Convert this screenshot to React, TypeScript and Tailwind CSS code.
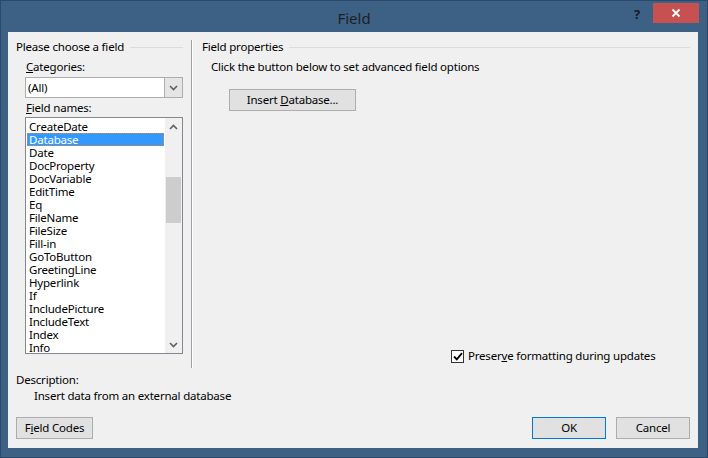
import React from "react";

// Word "Field" dialog

const FONT = { fontFamily: '"Noto Sans", "Open Sans", sans-serif' };

const FIELD_NAMES = [
  "CreateDate",
  "Database",
  "Date",
  "DocProperty",
  "DocVariable",
  "EditTime",
  "Eq",
  "FileName",
  "FileSize",
  "Fill-in",
  "GoToButton",
  "GreetingLine",
  "Hyperlink",
  "If",
  "IncludePicture",
  "IncludeText",
  "Index",
  "Info",
];

function GroupHeader({ title }: { title: string }) {
  return (
    <div className="flex items-center h-[16px] gap-[6px]">
      <span className="whitespace-nowrap">{title}</span>
      <div className="flex-1 h-px bg-[#dcdcdc]" />
    </div>
  );
}

function Chevron({ up }: { up?: boolean }) {
  return (
    <svg width="9" height="6" viewBox="0 0 9 6">
      <path
        d={up ? "M1 5 L4.5 1.5 L8 5" : "M1 1 L4.5 4.5 L8 1"}
        fill="none"
        stroke="#606060"
        strokeWidth="1.6"
      />
    </svg>
  );
}

function Button({
  children,
  width,
  primary,
}: {
  children: React.ReactNode;
  width: string;
  primary?: boolean;
}) {
  return (
    <div
      className={
        "h-[22px] flex items-center justify-center bg-[#e1e1e1] border " +
        (primary ? "border-[#0078d7] " : "border-[#adadad] ") +
        width
      }
    >
      <span>{children}</span>
    </div>
  );
}

export default function App() {
  return (
    <div
      className="w-[708px] h-[458px] bg-[#3d6185] border border-[#2b4a6b] flex flex-col text-[11.5px] tracking-[-0.2px] text-black"
      style={FONT}
    >
      {/* Title bar */}
      <div className="h-[31px] flex items-start relative">
        <div className="flex-1 text-center text-[15px] tracking-normal text-[#1f1f1f] pt-[6px]">Field</div>
        <div className="absolute right-[67px] top-[4px] text-[13px] font-bold text-[#1a1a1a]">?</div>
        <div className="absolute right-[8px] top-[2px] w-[46px] h-[20px] bg-[#c75050] flex items-center justify-center">
          <svg width="10" height="10" viewBox="0 0 10 10">
            <path d="M1.5 1.5 L8.5 8.5 M8.5 1.5 L1.5 8.5" stroke="#fff" strokeWidth="1.8" />
          </svg>
        </div>
      </div>

      {/* Content */}
      <div className="ml-[7px] mr-[9px] h-[416px] bg-[#f0f0f0] px-[8px] pt-[7px] flex flex-col">
        <div className="flex h-[330px]">
          {/* Left group */}
          <div className="w-[167px] flex flex-col">
            <GroupHeader title="Please choose a field" />
            <div className="ml-[10px] mt-[3px] h-[16px]">
              <u>C</u>ategories:
            </div>
            <div className="ml-[9px] mt-[3px] w-[158px] h-[21px] flex border border-[#adadad] bg-white">
              <div className="flex-1 flex items-center pl-[2px]">(All)</div>
              <div className="w-[18px] bg-[#e5e5e5] border-l border-[#adadad] flex items-center justify-center">
                <Chevron />
              </div>
            </div>
            <div className="ml-[10px] mt-[1px] h-[16px]">
              <u>F</u>ield names:
            </div>
            <div className="ml-[9px] mt-[2px] w-[158px] h-[237px] flex border border-[#828790] bg-white">
              <div className="flex-1 flex flex-col pt-[2px] pl-[1px] pr-[1px]">
                {FIELD_NAMES.map((name) => (
                  <div
                    key={name}
                    className={
                      "h-[13px] leading-[13px] pl-[2px] " +
                      (name === "Database"
                        ? "bg-[#3399ff] text-white outline-1 outline-dotted outline-[#e2862f] -outline-offset-1"
                        : "")
                    }
                  >
                    {name}
                  </div>
                ))}
              </div>
              <div className="w-[17px] bg-[#f0f0f0] flex flex-col items-center">
                <div className="h-[17px] flex items-center justify-center">
                  <Chevron up />
                </div>
                <div className="mt-[42px] w-[15px] h-[46px] bg-[#cdcdcd]" />
                <div className="flex-1" />
                <div className="h-[17px] flex items-center justify-center">
                  <Chevron />
                </div>
              </div>
            </div>
          </div>

          {/* Separator */}
          <div className="ml-[8px] mt-[1px] w-[2px] h-[328px] border-l border-[#a0a0a0] border-r border-r-white" />

          {/* Right group */}
          <div className="flex-1 pl-[9px] flex flex-col">
            <GroupHeader title="Field properties" />
            <div className="ml-[9px] mt-[3px] h-[16px]">
              Click the button below to set advanced field options
            </div>
            <div className="ml-[27px] mt-[15px]">
              <Button width="w-[127px]">
                Insert <u>D</u>atabase...
              </Button>
            </div>
            <div className="flex-1" />
            <div className="ml-[249px] mb-[5px] flex items-center gap-[4px] h-[16px]">
              <div className="w-[13px] h-[13px] border border-[#333] bg-white flex items-center justify-center">
                <svg width="10" height="9" viewBox="0 0 10 9">
                  <path d="M1 4.5 L3.8 7.3 L9 1.2" fill="none" stroke="#000" strokeWidth="1.8" />
                </svg>
              </div>
              <span>
                Preser<u>v</u>e formatting during updates
              </span>
            </div>
          </div>
        </div>

        {/* Description */}
        <div className="mt-[2px] h-[16px]">Description:</div>
        <div className="pl-[18px] h-[16px]">Insert data from an external database</div>

        {/* Buttons */}
        <div className="mt-[14px] flex items-center">
          <Button width="w-[77px]">
            F<u>i</u>eld Codes
          </Button>
          <div className="flex-1" />
          <Button width="w-[74px]" primary>
            OK
          </Button>
          <div className="w-[10px]" />
          <Button width="w-[74px]">Cancel</Button>
        </div>
      </div>
    </div>
  );
}
